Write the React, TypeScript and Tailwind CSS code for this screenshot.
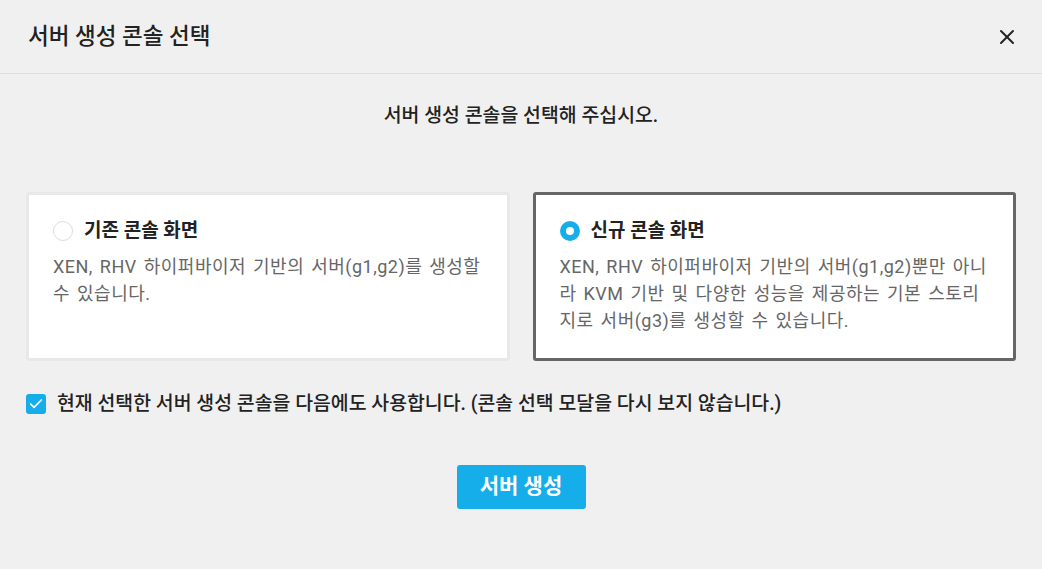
import { X, Check } from 'lucide-react';

const font = { fontFamily: 'Roboto, "Noto Sans CJK KR", sans-serif' };

function ConsoleCard({
  title,
  desc,
  selected,
}: {
  title: string;
  desc: string;
  selected: boolean;
}) {
  return (
    <div
      className={
        selected
          ? 'rounded-[3px] border-[3px] border-[#666666] bg-white pl-6 pr-[23px] pt-[22px]'
          : 'rounded-[3px] border-[3px] border-[#e8e8e8] bg-white pl-6 pr-[18px] pt-[22px]'
      }
    >
      <div className="flex h-[28px] items-center gap-[11px]">
        {selected ? (
          <span className="flex h-5 w-5 items-center justify-center rounded-full bg-[#15aeea]">
            <span className="h-2 w-2 rounded-full bg-white" />
          </span>
        ) : (
          <span className="h-5 w-5 rounded-full border border-[#dddddd] bg-white" />
        )}
        <span className="text-[19px] font-bold text-[#222222]">{title}</span>
      </div>
      <p className="mt-2 break-all text-[18px] leading-[27px] tracking-[0.5px] text-[#666666] [word-spacing:2px]">
        {desc}
      </p>
    </div>
  );
}

export default function App() {
  return (
    <div className="h-[569px] w-[1042px] bg-[#f0f0f0]" style={font}>
      {/* Header */}
      <div className="flex h-[74px] items-center justify-between border-b border-[#dedede] pl-[28px] pr-[23px]">
        <h2 className="text-[22.5px] font-medium text-[#222222]">서버 생성 콘솔 선택</h2>
        <X className="h-6 w-6 text-[#222222]" strokeWidth={2} />
      </div>

      <div className="px-[26px]">
        <p className="pt-[28px] text-center text-[19.4px] font-medium leading-[28px] text-[#222222]">
          서버 생성 콘솔을 선택해 주십시오.
        </p>

        <div className="mt-[62px] grid h-[169px] grid-cols-2 gap-[23px]">
          <ConsoleCard
            title="기존 콘솔 화면"
            desc="XEN, RHV 하이퍼바이저 기반의 서버(g1,g2)를 생성할 수 있습니다."
            selected={false}
          />
          <ConsoleCard
            title="신규 콘솔 화면"
            desc="XEN, RHV 하이퍼바이저 기반의 서버(g1,g2)뿐만 아니라 KVM 기반 및 다양한 성능을 제공하는 기본 스토리지로 서버(g3)를 생성할 수 있습니다."
            selected
          />
        </div>

        {/* Remember choice */}
        <label className="mt-[29px] flex h-[28px] items-center gap-[11px]">
          <span className="flex h-5 w-5 items-center justify-center rounded-[3px] bg-[#15aeea]">
            <Check className="h-4 w-4 text-white" strokeWidth={2.5} />
          </span>
          <span className="text-[19.4px] font-medium text-[#222222]">
            현재 선택한 서버 생성 콘솔을 다음에도 사용합니다. (콘솔 선택 모달을 다시 보지 않습니다.)
          </span>
        </label>

        <div className="mt-[47px] flex justify-center">
          <button className="h-[44px] w-[129px] rounded-[3px] bg-[#15aeea] text-[21px] font-bold text-white">
            서버 생성
          </button>
        </div>
      </div>
    </div>
  );
}
